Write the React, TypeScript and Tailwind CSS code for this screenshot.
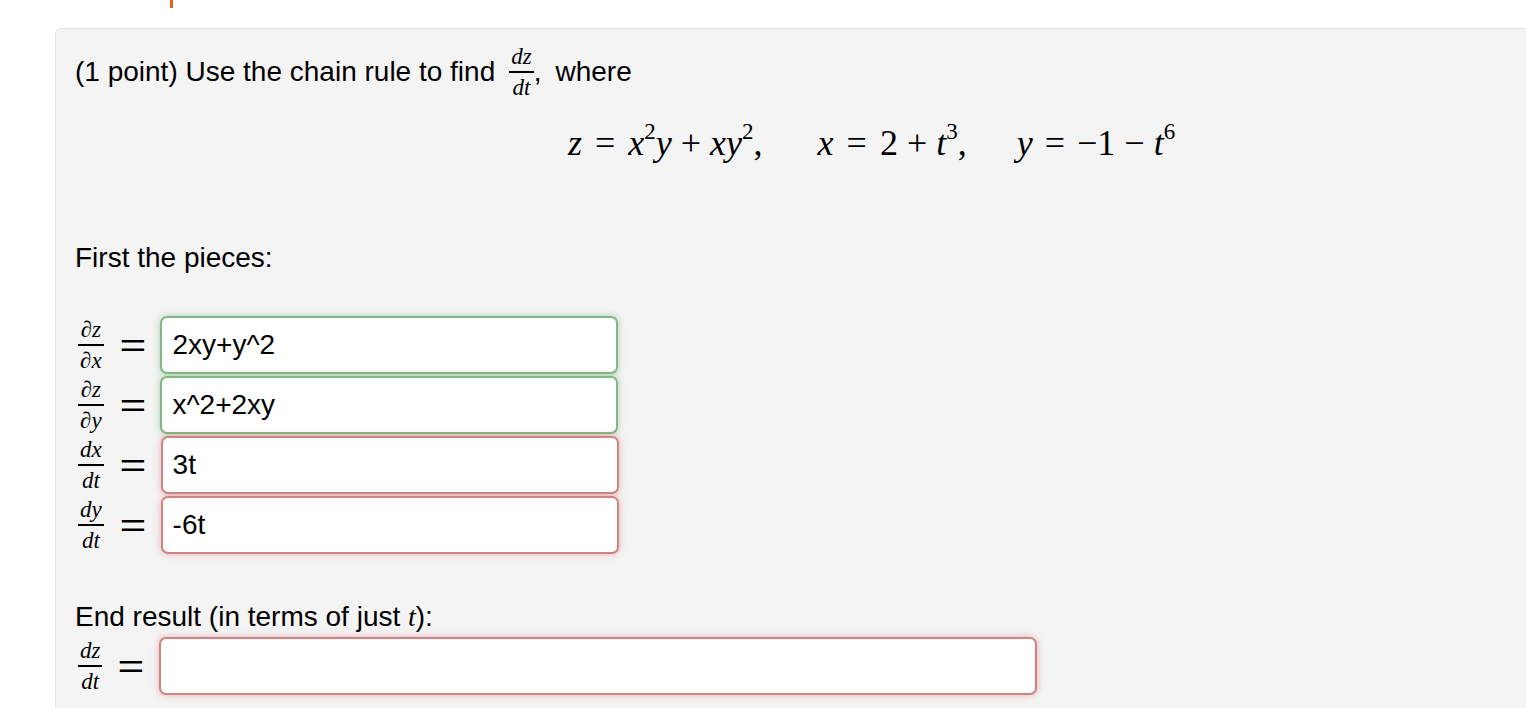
import type { ReactNode } from "react";

const sans = { fontFamily: '"Liberation Sans", Arial, sans-serif' };
const serif = { fontFamily: '"Liberation Serif", "Times New Roman", serif' };

function Frac({ top, bottom, size = "text-[23px]" }: { top: ReactNode; bottom: ReactNode; size?: string }) {
  return (
    <span className={`inline-flex flex-col items-center align-middle italic leading-none ${size}`} style={serif}>
      <span className="px-[2px] pb-[3px]">{top}</span>
      <span className="h-[1.5px] w-full bg-black" />
      <span className="px-[2px] pt-[3px]">{bottom}</span>
    </span>
  );
}

function Answer({ frac, value, ok, wide }: { frac: ReactNode; value: string; ok?: boolean; wide?: boolean }) {
  return (
    <div className="flex h-[60px] items-center">
      <div className="ml-[3px]">{frac}</div>
      <span className="ml-[19px] mr-[18px] inline-block scale-x-[1.35] text-[34px] leading-none">=</span>
      <input
        readOnly
        value={value}
        className={`h-[58px] rounded-[7px] border-2 bg-white px-[10px] text-[28px] text-black outline-none ${
          wide ? "w-[878px]" : "w-[458px]"
        } ${
          ok
            ? "border-[#84b584] shadow-[0_0_7px_rgba(110,180,110,0.55)]"
            : "border-[#cf8484] shadow-[0_0_7px_rgba(225,110,110,0.5)]"
        }`}
        style={sans}
      />
    </div>
  );
}

function I({ children }: { children: ReactNode }) {
  return <span className="italic">{children}</span>;
}

function Sup({ children }: { children: ReactNode }) {
  return <sup className="relative -top-[16px] text-[23px]">{children}</sup>;
}

export default function App() {
  const d = <span>&#8706;</span>;
  return (
    <div className="relative h-[708px] overflow-hidden bg-white text-black" style={sans}>
      <div className="absolute left-[170px] top-0 h-[8px] w-[3px] bg-[#e0661c]" />
      <div className="ml-[55px] mt-[28px] h-[800px] w-[1600px] rounded-tl-[6px] border border-[#e4e4e4] bg-[#f4f4f4] pl-[19px] pt-[16px]">
        <div className="flex h-[54px] items-center text-[28px]">
          <span>(1 point) Use the chain rule to find</span>
          <span className="ml-[14px]">
            <Frac top="dz" bottom="dt" size="text-[23px]" />
          </span>
          <span>,</span>
          <span className="ml-[14px]">where</span>
        </div>

        <div className="ml-[493px] mt-[24px] flex items-baseline text-[36px] leading-[40px]" style={serif}>
          <I>z</I>
          <span className="mx-[13px]">=</span>
          <I>x</I>
          <Sup>2</Sup>
          <I>y</I>
          <span className="mx-[9px]">+</span>
          <I>xy</I>
          <Sup>2</Sup>
          <span>,</span>
          <span className="w-[55px]" />
          <I>x</I>
          <span className="mx-[13px]">=</span>
          <span>2</span>
          <span className="mx-[9px]">+</span>
          <I>t</I>
          <Sup>3</Sup>
          <span>,</span>
          <span className="w-[50px]" />
          <I>y</I>
          <span className="mx-[12px]">=</span>
          <span>&minus;1</span>
          <span className="mx-[9px]">&minus;</span>
          <I>t</I>
          <Sup>6</Sup>
        </div>

        <div className="mt-[79px] text-[28px] leading-[32px]">First the pieces:</div>

        <div className="mt-[41px] flex flex-col">
          <Answer frac={<Frac top={<>{d}z</>} bottom={<>{d}x</>} />} value="2xy+y^2" ok />
          <Answer frac={<Frac top={<>{d}z</>} bottom={<>{d}y</>} />} value="x^2+2xy" ok />
          <Answer frac={<Frac top="dx" bottom="dt" />} value="3t" />
          <Answer frac={<Frac top="dy" bottom="dt" />} value="-6t" />
        </div>

        <div className="mt-[46px] text-[28px] leading-[32px]">
          End result (in terms of just{" "}
          <span className="italic" style={serif}>
            t
          </span>
          ):
        </div>
        <div className="mt-[3px]">
          <Answer frac={<Frac top="dz" bottom="dt" />} value="" wide />
        </div>
      </div>
    </div>
  );
}
